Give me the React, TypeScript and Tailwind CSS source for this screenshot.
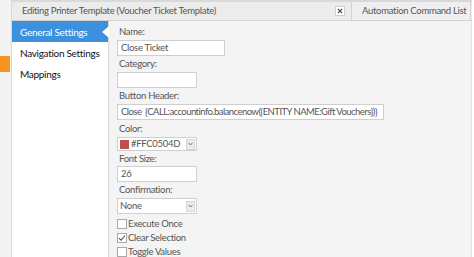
import React from "react";

function Input({ value, w, extra = "" }: { value?: string; w: string; extra?: string }) {
  return (
    <div className={`${w} h-[16px] shrink-0 bg-white border border-[#cfcfcf] px-[3px] flex items-center text-[#555] whitespace-pre overflow-hidden ${extra}`}>
      {value}
    </div>
  );
}

function SelectBox({ children, w, h }: { children: React.ReactNode; w: string; h: string }) {
  return (
    <div className={`${w} ${h} shrink-0 bg-white border border-[#cfcfcf] pl-[2px] flex items-center text-[#555]`}>
      <div className="flex-1 flex items-center gap-[2px]">{children}</div>
      <div className="w-[9px] h-[11px] mr-[1px] bg-[#ececec] border border-[#d6d6d6] flex items-center justify-center">
        <svg width="5" height="4" viewBox="0 0 5 4">
          <path d="M0.5 0.8 L2.5 3 L4.5 0.8" fill="none" stroke="#777" strokeWidth="1" />
        </svg>
      </div>
    </div>
  );
}

function Check({ label, checked }: { label: string; checked?: boolean }) {
  return (
    <div className="flex items-center gap-[1px] h-[14px] shrink-0 text-[#555]">
      <div className="w-[10px] h-[10px] bg-white border border-[#a9a9a9] flex items-center justify-center">
        {checked && (
          <svg width="8" height="8" viewBox="0 0 8 8">
            <path d="M1 4.2 L3 6.2 L7 1.5" fill="none" stroke="#555" strokeWidth="1.1" />
          </svg>
        )}
      </div>
      <span>{label}</span>
    </div>
  );
}

function Label({ text, h }: { text: string; h: string }) {
  return <div className={`${h} shrink-0 pl-[2px] flex items-center`}>{text}</div>;
}

export default function App() {
  return (
    <div
      className="w-[474px] h-[257px] overflow-hidden flex bg-white text-[9.5px] leading-none tracking-[-0.3px]"
      style={{ fontFamily: 'Lato, "Noto Sans", sans-serif' }}
    >
      {/* Left edge strip */}
      <div className="w-[12px] h-full shrink-0 bg-[#f3f3f3] border-r border-[#d9d9d9] flex flex-col">
        <div className="mt-[56px] w-[10px] h-[16px] bg-[#f7931e]" />
      </div>

      {/* Main window */}
      <div className="w-[460px] h-full flex flex-col">
        <div className="h-[2px] shrink-0 bg-[#d9d9d9]" />
        {/* Tab header */}
        <div className="h-[19px] shrink-0 flex border-b border-[#d3d3d3] bg-[#ececec] text-[#555]">
          <div className="w-[340px] flex items-center pl-[10px] pr-[6px] border-r border-[#d3d3d3]">
            <span className="flex-1">Editing Printer Template (Voucher Ticket Template)</span>
            <div className="w-[10px] h-[10px] bg-white border border-[#cfcfcf] flex items-center justify-center">
              <svg width="6" height="6" viewBox="0 0 6 6">
                <path d="M1 1 L5 5 M5 1 L1 5" stroke="#555" strokeWidth="1.2" />
              </svg>
            </div>
          </div>
          <div className="w-[119px] flex items-center pl-[10px] border-r border-[#d3d3d3] bg-[#efefef] whitespace-nowrap">
            Automation Command List
          </div>
        </div>

        {/* Body */}
        <div className="flex-1 min-h-0 overflow-hidden flex">
          {/* Nav */}
          <div className="w-[97px] shrink-0 bg-white border-r border-[#d6d6d6] flex flex-col text-[10px] text-[#111]">
            <div className="relative h-[21px] shrink-0 bg-[#3d90db] text-white flex items-center pl-[8px]">
              General Settings
              <div className="absolute right-[-1px] top-[5px] w-0 h-0 border-y-[6px] border-y-transparent border-r-[7px] border-r-white" />
            </div>
            <div className="h-[21px] shrink-0 flex items-center pl-[8px]">Navigation Settings</div>
            <div className="h-[21px] shrink-0 flex items-center pl-[8px]">Mappings</div>
          </div>

          {/* Form */}
          <div className="flex-1 bg-[#f4f4f4] border-r border-[#e2e2e2] pl-[8px] pt-[3px] flex flex-col text-[#555]">
            <Label text="Name:" h="h-[16px]" />
            <Input value="Close Ticket" w="w-[108px]" />
            <Label text="Category:" h="h-[16px]" />
            <Input w="w-[80px]" />
            <Label text="Button Header:" h="h-[16px]" />
            <Input
              value="Close  {CALL:accountinfo.balancenow({ENTITY NAME:Gift Vouchers})}"
              w="w-[267px]"
              extra="tracking-[-0.55px]"
            />
            <Label text="Color:" h="h-[17px]" />
            <SelectBox w="w-[80px]" h="h-[14px]">
              <div className="w-[9px] h-[9px] bg-[#c0504d]" />
              <span>#FFC0504D</span>
            </SelectBox>
            <Label text="Font Size:" h="h-[15px]" />
            <Input value="26" w="w-[80px]" />
            <Label text="Confirmation:" h="h-[16px]" />
            <SelectBox w="w-[80px]" h="h-[16px]">
              <span>None</span>
            </SelectBox>
            <div className="h-[3px] shrink-0" />
            <Check label="Execute Once" />
            <Check label="Clear Selection" checked />
            <Check label="Toggle Values" />
          </div>
        </div>
      </div>
    </div>
  );
}
